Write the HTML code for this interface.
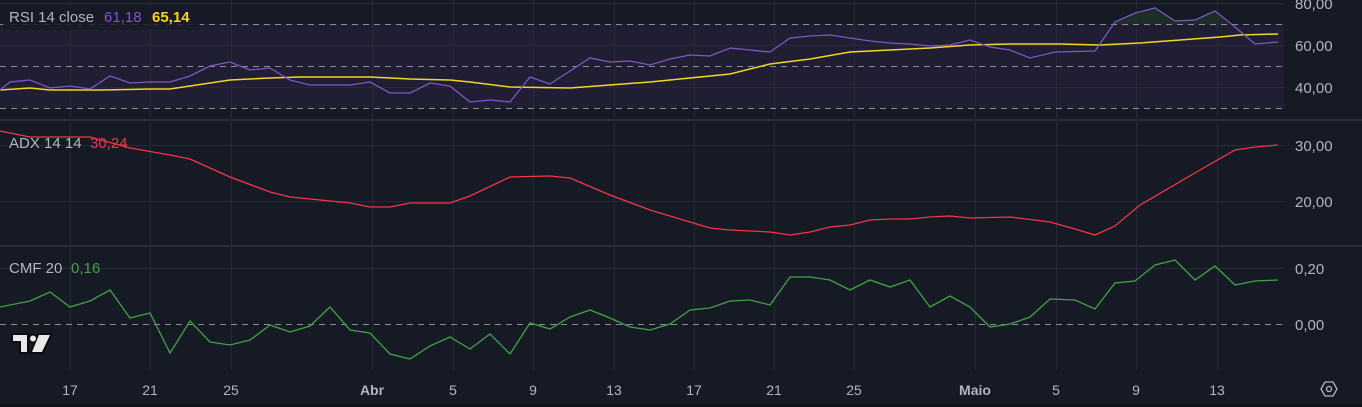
<!DOCTYPE html>
<html><head><meta charset="utf-8"><style>
html,body{margin:0;padding:0;background:#161a25;width:1362px;height:407px;overflow:hidden}
svg{display:block}
text{font-family:"Liberation Sans",sans-serif}
</style></head><body>
<svg width="1362" height="407" xmlns="http://www.w3.org/2000/svg">
<rect width="1362" height="407" fill="#161a25"/>
<rect x="0" y="24" width="1284" height="84" fill="#201e33"/>
<g stroke="#262a37" stroke-width="1">
<line x1="70.5" y1="0" x2="70.5" y2="370"/><line x1="150.5" y1="0" x2="150.5" y2="370"/><line x1="231.5" y1="0" x2="231.5" y2="370"/><line x1="372.5" y1="0" x2="372.5" y2="370"/><line x1="453.5" y1="0" x2="453.5" y2="370"/><line x1="533.5" y1="0" x2="533.5" y2="370"/><line x1="614.5" y1="0" x2="614.5" y2="370"/><line x1="694.5" y1="0" x2="694.5" y2="370"/><line x1="774.5" y1="0" x2="774.5" y2="370"/><line x1="854.5" y1="0" x2="854.5" y2="370"/><line x1="975.5" y1="0" x2="975.5" y2="370"/><line x1="1056.5" y1="0" x2="1056.5" y2="370"/><line x1="1136.5" y1="0" x2="1136.5" y2="370"/><line x1="1217.5" y1="0" x2="1217.5" y2="370"/>
<line x1="0" y1="3.5" x2="1284" y2="3.5"/><line x1="0" y1="45.5" x2="1284" y2="45.5"/><line x1="0" y1="87.5" x2="1284" y2="87.5"/>
<line x1="0" y1="145.5" x2="1284" y2="145.5"/><line x1="0" y1="201.5" x2="1284" y2="201.5"/><line x1="0" y1="268.5" x2="1284" y2="268.5"/>
</g>
<rect x="0" y="119" width="1362" height="2" fill="#2a2e39"/>
<rect x="0" y="245" width="1362" height="2" fill="#2a2e39"/>
<rect x="0" y="404" width="1362" height="3" fill="#0f1118"/>
<g stroke="#8a8d96" stroke-width="1" stroke-dasharray="6,5">
<line x1="0" y1="24.5" x2="1284" y2="24.5"/><line x1="0" y1="66.5" x2="1284" y2="66.5"/><line x1="0" y1="108.5" x2="1284" y2="108.5"/><line x1="0" y1="324.5" x2="1284" y2="324.5"/>
</g>
<polygon points="1110,24 1115,22 1135,13 1155,8 1175,21 1195,20 1215,11 1228,24" fill="#1d3328" opacity="0.8"/>
<polyline fill="none" stroke="#f4d422" stroke-width="1.5" points="0,90 30,88 50,90 100,90 150,89 170,89 190,86 230,80 270,78 300,77 370,77 410,79 450,80 470,82 510,87 570,88 610,85 650,82 690,78 730,74 770,64 810,59 850,52 890,50 930,48 970,45 1010,44 1060,44 1100,45 1140,43 1180,40 1220,37 1240,35 1278,34"/>
<polyline fill="none" stroke="#7e57c2" stroke-width="1.3" points="0,90 10,82 30,80 50,88 70,86 90,89 110,76 130,83 150,82 170,82 190,76 210,66 230,62 250,70 270,68 290,80 310,85 330,85 350,85 370,82 390,93 410,93 430,83 450,86 470,102 490,100 510,102 530,77 550,84 570,71 590,58 610,62 630,61 650,65 670,59 690,55 710,56 730,48 750,50 770,52 790,38 810,36 830,35 850,38 870,41 890,43 910,44 930,46 950,45 970,40 990,47 1010,50 1030,58 1055,52 1095,51 1115,22 1135,13 1155,8 1175,21 1195,20 1215,11 1235,27 1255,44 1278,42"/>
<polyline fill="none" stroke="#f23645" stroke-width="1.3" points="0,131 30,137 90,137 130,148 170,155 190,159 230,177 270,192 290,197 350,203 370,207 390,207 410,203 450,203 470,196 510,177 550,176 570,178 610,195 650,210 710,228 730,230 770,232 790,235 810,232 830,227 850,225 870,220 890,219 910,219 930,217 950,216 970,218 1010,217 1050,222 1075,229 1095,235 1115,226 1140,205 1200,170 1235,150 1255,147 1278,145"/>
<polyline fill="none" stroke="#43a047" stroke-width="1.3" points="0,307 30,301 50,292 70,307 90,301 110,290 130,318 150,313 170,353 190,321 210,342 230,345 250,340 270,325 290,332 310,326 330,307 350,330 370,333 390,354 410,359 430,346 450,337 470,349 490,334 510,354 530,323 550,329 570,317 590,310 610,318 630,327 650,330 670,324 690,310 710,308 730,301 750,300 770,305 790,277 810,277 830,280 850,290 870,280 890,287 910,280 930,307 950,296 970,307 990,327 1010,324 1030,317 1050,299 1075,300 1095,309 1115,283 1135,281 1155,265 1175,260 1195,280 1215,266 1235,285 1255,281 1278,280"/>
<rect x="3" y="6" width="197" height="24" fill="#181b27" opacity="0.85"/>
<g font-size="15">
<text x="9" y="22" fill="#b2b5be">RSI 14 close</text><text x="104" y="22" fill="#7e57c2">61,18</text><text x="152" y="22" fill="#f4d422" font-weight="bold">65,14</text>
<text x="9" y="148" fill="#b2b5be">ADX 14 14</text><text x="90" y="148" fill="#f23645">30,24</text>
<text x="9" y="273" fill="#b2b5be">CMF 20</text><text x="71" y="273" fill="#43a047">0,16</text>
</g>
<g font-size="15" fill="#b2b5be">
<text x="1295" y="9">80,00</text><text x="1295" y="51">60,00</text><text x="1295" y="93">40,00</text>
<text x="1295" y="151">30,00</text><text x="1295" y="207">20,00</text>
<text x="1295" y="274">0,20</text><text x="1295" y="330">0,00</text>
</g>
<g font-size="14" fill="#b2b5be" text-anchor="middle">
<text x="70" y="395">17</text><text x="150" y="395">21</text><text x="231" y="395">25</text><text x="372" y="395" font-weight="bold">Abr</text><text x="453" y="395">5</text><text x="533" y="395">9</text><text x="614" y="395">13</text><text x="694" y="395">17</text><text x="774" y="395">21</text><text x="854" y="395">25</text><text x="975" y="395" font-weight="bold">Maio</text><text x="1056" y="395">5</text><text x="1136" y="395">9</text><text x="1217" y="395">13</text>
</g>
<g transform="translate(13,335)">
<g fill="#0b0b0b" stroke="#0b0b0b" stroke-width="4" stroke-linejoin="round">
<path d="M0,0 H14 V17 H8 V6 H0 Z"/><circle cx="20" cy="3.5" r="3"/><path d="M26,0 H37 L29,17 H19 Z"/>
</g>
<g fill="#e8e8e8">
<path d="M0,0 H14 V17 H8 V6 H0 Z"/><circle cx="20" cy="3.5" r="3"/><path d="M26,0 H37 L29,17 H19 Z"/>
</g>
</g>
<polygon points="1321,389 1325,382 1333,382 1337,389 1333,396 1325,396" fill="none" stroke="#b2b5be" stroke-width="1.3"/>
<circle cx="1329" cy="389" r="2.5" fill="none" stroke="#b2b5be" stroke-width="1.3"/>
</svg>
</body></html>
